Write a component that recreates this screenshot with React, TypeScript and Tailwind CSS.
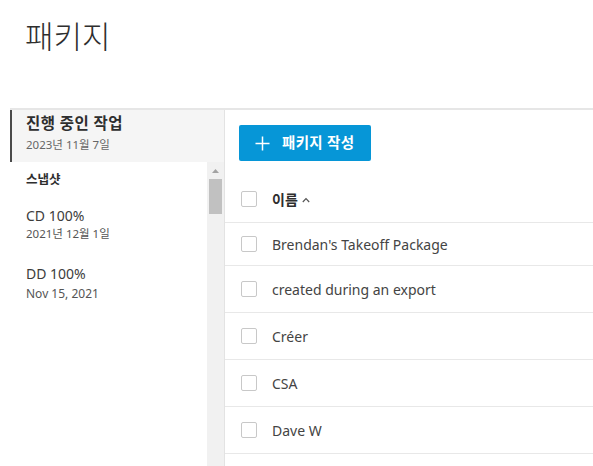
import React from "react";

const rows = [
  "Brendan's Takeoff Package",
  "created during an export",
  "Créer",
  "CSA",
  "Dave W",
];

function Checkbox() {
  return <span className="block w-[16px] h-[16px] rounded-[2px] border border-[#c8c8c8] bg-white" />;
}

export default function App() {
  return (
    <div
      className="h-screen w-full overflow-hidden bg-white text-[#3c3c3c] flex flex-col"
      style={{ fontFamily: '"Noto Sans", "Noto Sans CJK KR", sans-serif' }}
    >
      {/* Page title */}
      <div className="h-[108px] pl-[25px] pt-[16px]">
        <h1 className="text-[31px] font-light leading-[40px] text-[#2e2e2e]">패키지</h1>
      </div>

      <div className="flex flex-1 ml-[10px] border-t-2 border-[#e6e6e6] min-h-0">
        {/* Sidebar */}
        <aside className="w-[215px] flex flex-col border-r border-[#e3e3e3]">
          <div className="h-[52px] bg-[#f5f5f5] border-l-2 border-[#4a4a4a] pl-[14px] pt-[3px]">
            <div className="text-[15.5px] font-bold leading-[20px] tracking-[0.4px] text-[#2e2e2e]">진행 중인 작업</div>
            <div className="text-[11.5px] leading-[16px] mt-[4px] text-[#666]">2023년 11월 7일</div>
          </div>
          <div className="flex flex-1 min-h-0">
            <div className="flex-1 pl-[16px] pt-[10px]">
              <div className="text-[12.5px] font-bold leading-[16px] text-[#2e2e2e]">스냅샷</div>
              <div className="mt-[18px]">
                <div className="text-[14px] leading-[20px]">CD 100%</div>
                <div className="text-[11.5px] leading-[16px] text-[#555]">2021년 12월 1일</div>
              </div>
              <div className="mt-[22px]">
                <div className="text-[14px] leading-[20px]">DD 100%</div>
                <div className="text-[12px] leading-[16px] mt-[2px] text-[#555]">Nov 15, 2021</div>
              </div>
            </div>
            {/* scrollbar */}
            <div className="w-[17px] bg-[#f1f1f1] flex flex-col items-center pt-[7px]">
              <svg width="7" height="4" viewBox="0 0 7 4">
                <path d="M0 4 L3.5 0 L7 4 Z" fill="#a3a3a3" />
              </svg>
              <div className="mt-[6px] w-[13px] h-[35px] bg-[#c1c1c1]" />
            </div>
          </div>
        </aside>

        {/* Main content */}
        <main className="flex-1 flex flex-col pt-[15px]">
          <div className="pl-[14px]">
            <button className="h-[36px] w-[132px] rounded-[2px] bg-[#0696d7] text-white flex items-center pl-[16px]">
              <svg width="15" height="15" viewBox="0 0 15 15">
                <path d="M7.5 0.5 V14.5 M0.5 7.5 H14.5" stroke="white" strokeWidth="1.5" />
              </svg>
              <span className="ml-[12px] text-[14.5px] font-bold tracking-[0.3px]">패키지 작성</span>
            </button>
          </div>

          <div className="mt-[15px] h-[47px] flex items-center pl-[16px] border-b border-[#e8e8e8]">
            <Checkbox />
            <span className="ml-[15px] text-[14px] font-bold text-[#2e2e2e]">이름</span>
            <svg className="ml-[4px] mt-[2px]" width="8" height="6" viewBox="0 0 8 6">
              <path d="M0.8 5 L4 1.6 L7.2 5" fill="none" stroke="#555" strokeWidth="1.2" />
            </svg>
          </div>

          {rows.map((r, i) => (
            <div
              key={r}
              className={`${i === 0 ? "h-[43px]" : "h-[47px]"} flex items-center pl-[16px] border-b border-[#e8e8e8]`}
            >
              <Checkbox />
              <span className="ml-[15px] text-[14px] text-[#444]">{r}</span>
            </div>
          ))}
        </main>
      </div>
    </div>
  );
}
